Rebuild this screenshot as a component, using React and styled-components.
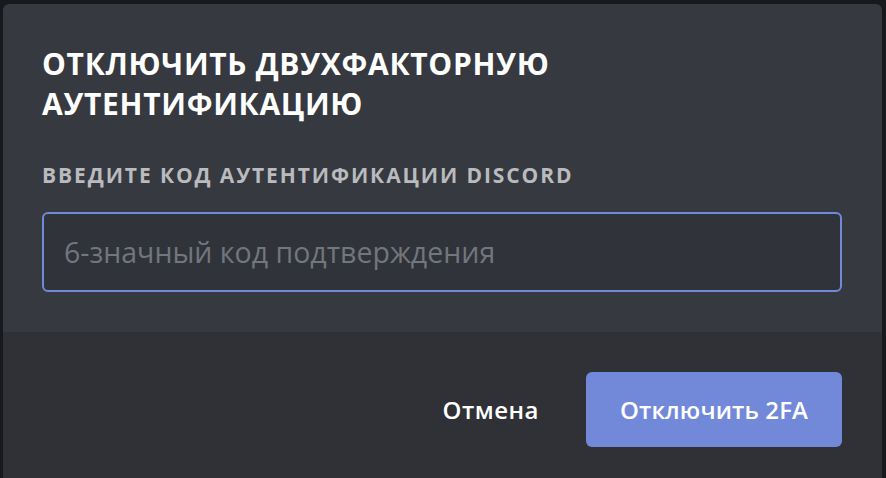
import React from "react";
import styled, { createGlobalStyle } from "styled-components";

const GlobalStyle = createGlobalStyle`
  html, body {
    margin: 0;
    padding: 0;
    background: #18191c;
    height: 100%;
    overflow: hidden;
  }
  #root {
    height: 100%;
  }
`;

const Backdrop = styled.div`
  height: 100%;
  padding: 4px 4px 0 3px;
  box-sizing: border-box;
  font-family: "Open Sans", "Noto Sans", sans-serif;
`;

const Modal = styled.div`
  height: 100%;
  display: flex;
  flex-direction: column;
  background: #36393f;
  border-radius: 6px 6px 0 0;
  overflow: hidden;
`;

const Body = styled.div`
  padding: 40px 40px 40px 39px;
  display: flex;
  flex-direction: column;
`;

const Title = styled.h2`
  margin: 0;
  color: #ffffff;
  font-size: 30px;
  font-weight: 700;
  line-height: 40px;
  text-transform: uppercase;
  letter-spacing: 0.7px;
`;

const Label = styled.label`
  margin-top: 36px;
  color: #b9bbbe;
  font-size: 21px;
  font-weight: 700;
  line-height: 30px;
  text-transform: uppercase;
  letter-spacing: 1.9px;
`;

const Input = styled.input`
  margin-top: 22px;
  height: 80px;
  box-sizing: border-box;
  padding: 0 20px;
  background: #303339;
  border: 2px solid #7289da;
  border-radius: 6px;
  color: #dcddde;
  font-family: inherit;
  font-size: 28.5px;
  outline: none;

  &::placeholder {
    color: #72767d;
  }
`;

const Footer = styled.div`
  flex: 1;
  background: #2f3136;
  display: flex;
  justify-content: flex-end;
  align-items: flex-start;
  gap: 8px;
  padding: 40px 40px 0;
`;

const Button = styled.button`
  height: 75px;
  min-width: ${({ $primary }) => ($primary ? "256px" : "0")};
  padding: 0 ${({ $primary }) => ($primary ? "30px" : "39px")};
  border: none;
  border-radius: 6px;
  background: ${({ $primary }) => ($primary ? "#7289da" : "transparent")};
  color: #ffffff;
  font-family: inherit;
  font-size: 24px;
  font-weight: 600;
  letter-spacing: ${({ $primary }) => ($primary ? "0.1px" : "0.5px")};
  cursor: pointer;
`;

export default function App() {
  return (
    <>
      <GlobalStyle />
      <Backdrop>
        <Modal>
          <Body>
            <Title>
              Отключить двухфакторную
              <br />
              аутентификацию
            </Title>
            <Label htmlFor="code">Введите код аутентификации Discord</Label>
            <Input id="code" placeholder="6-значный код подтверждения" />
          </Body>
          <Footer>
            <Button>Отмена</Button>
            <Button $primary>Отключить 2FA</Button>
          </Footer>
        </Modal>
      </Backdrop>
    </>
  );
}
